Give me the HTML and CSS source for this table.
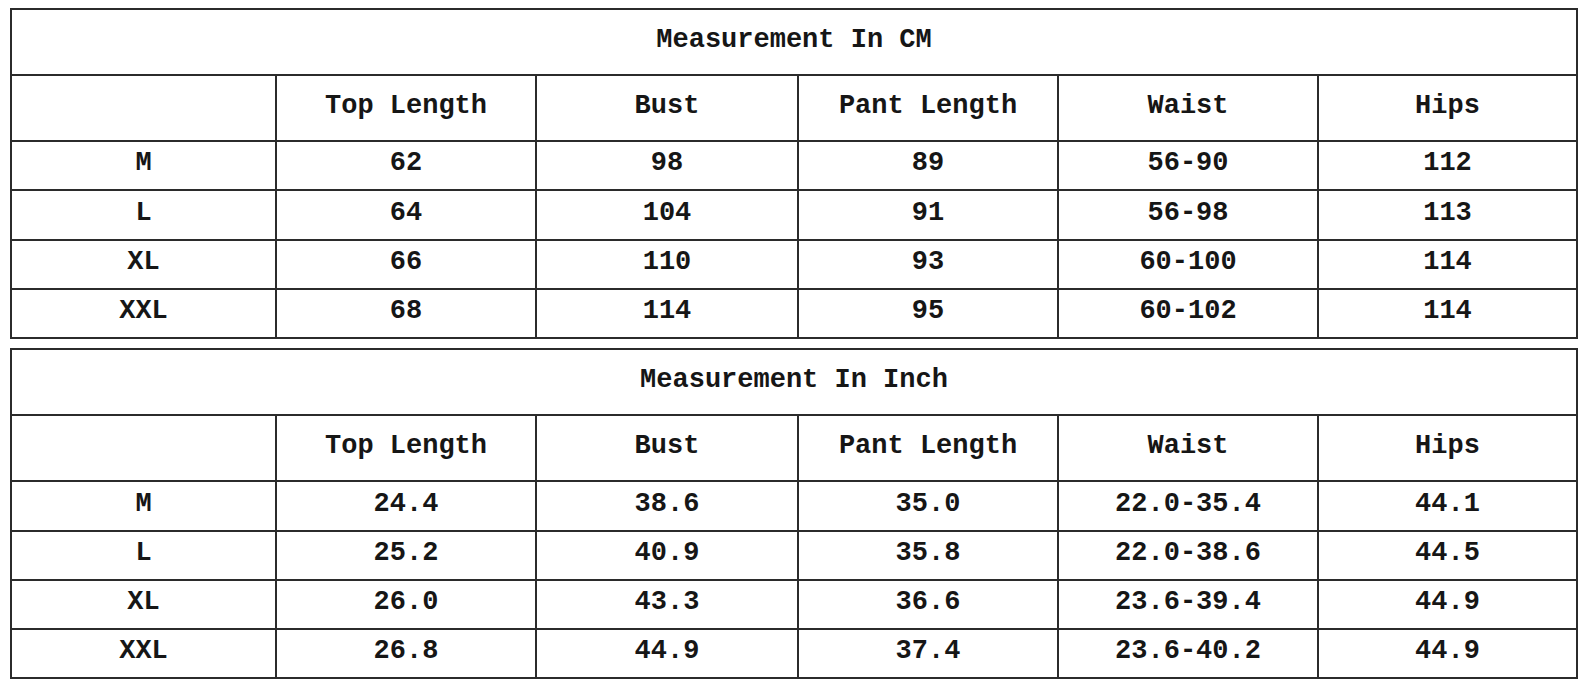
FILE: index.html
```html
<!DOCTYPE html>
<html>
<head>
<meta charset="utf-8">
<link rel="stylesheet" href="styles.css">
</head>
<body>
<div class="page">
  <table class="chart">
    <colgroup><col class="c1"><col class="c2"><col class="c3"><col class="c4"><col class="c5"><col class="c6"></colgroup>
    <tr class="title"><td colspan="6">Measurement In CM</td></tr>
    <tr class="head"><td></td><td>Top Length</td><td>Bust</td><td>Pant Length</td><td>Waist</td><td>Hips</td></tr>
    <tr class="row"><td>M</td><td>62</td><td>98</td><td>89</td><td>56-90</td><td>112</td></tr>
    <tr class="row r2"><td>L</td><td>64</td><td>104</td><td>91</td><td>56-98</td><td>113</td></tr>
    <tr class="row"><td>XL</td><td>66</td><td>110</td><td>93</td><td>60-100</td><td>114</td></tr>
    <tr class="row"><td>XXL</td><td>68</td><td>114</td><td>95</td><td>60-102</td><td>114</td></tr>
  </table>
  <table class="chart">
    <colgroup><col class="c1"><col class="c2"><col class="c3"><col class="c4"><col class="c5"><col class="c6"></colgroup>
    <tr class="title"><td colspan="6">Measurement In Inch</td></tr>
    <tr class="head"><td></td><td>Top Length</td><td>Bust</td><td>Pant Length</td><td>Waist</td><td>Hips</td></tr>
    <tr class="row r2"><td>M</td><td>24.4</td><td>38.6</td><td>35.0</td><td>22.0-35.4</td><td>44.1</td></tr>
    <tr class="row"><td>L</td><td>25.2</td><td>40.9</td><td>35.8</td><td>22.0-38.6</td><td>44.5</td></tr>
    <tr class="row"><td>XL</td><td>26.0</td><td>43.3</td><td>36.6</td><td>23.6-39.4</td><td>44.9</td></tr>
    <tr class="row"><td>XXL</td><td>26.8</td><td>44.9</td><td>37.4</td><td>23.6-40.2</td><td>44.9</td></tr>
  </table>
</div>
</body>
</html>
```

FILE: styles.css
```css
html, body {
  margin: 0;
  padding: 0;
  background: #ffffff;
}

.page {
  padding: 8px 10px 0 10px;
  display: flex;
  flex-direction: column;
  gap: 9px;
}

.chart {
  width: 1568px;
  table-layout: fixed;
  border-collapse: separate;
  border-spacing: 0;
  border-top: 2px solid #2b2b2b;
  border-left: 2px solid #2b2b2b;
  font-family: "Liberation Mono", "Courier New", monospace;
  font-weight: bold;
  font-size: 27px;
  color: #161616;
}

.chart td {
  border-right: 2px solid #2b2b2b;
  border-bottom: 2px solid #2b2b2b;
  text-align: center;
  vertical-align: middle;
  padding: 0 0 5px 0;
  white-space: nowrap;
  box-sizing: border-box;
}

.c1 { width: 265px; }
.c2 { width: 260px; }
.c3 { width: 262px; }
.c4 { width: 260px; }
.c5 { width: 260px; }
.c6 { width: 259px; }

.title td { height: 66px; }
.head td { height: 66px; }
.row td { height: 49px; }
.row.r2 td { height: 50px; }
```
